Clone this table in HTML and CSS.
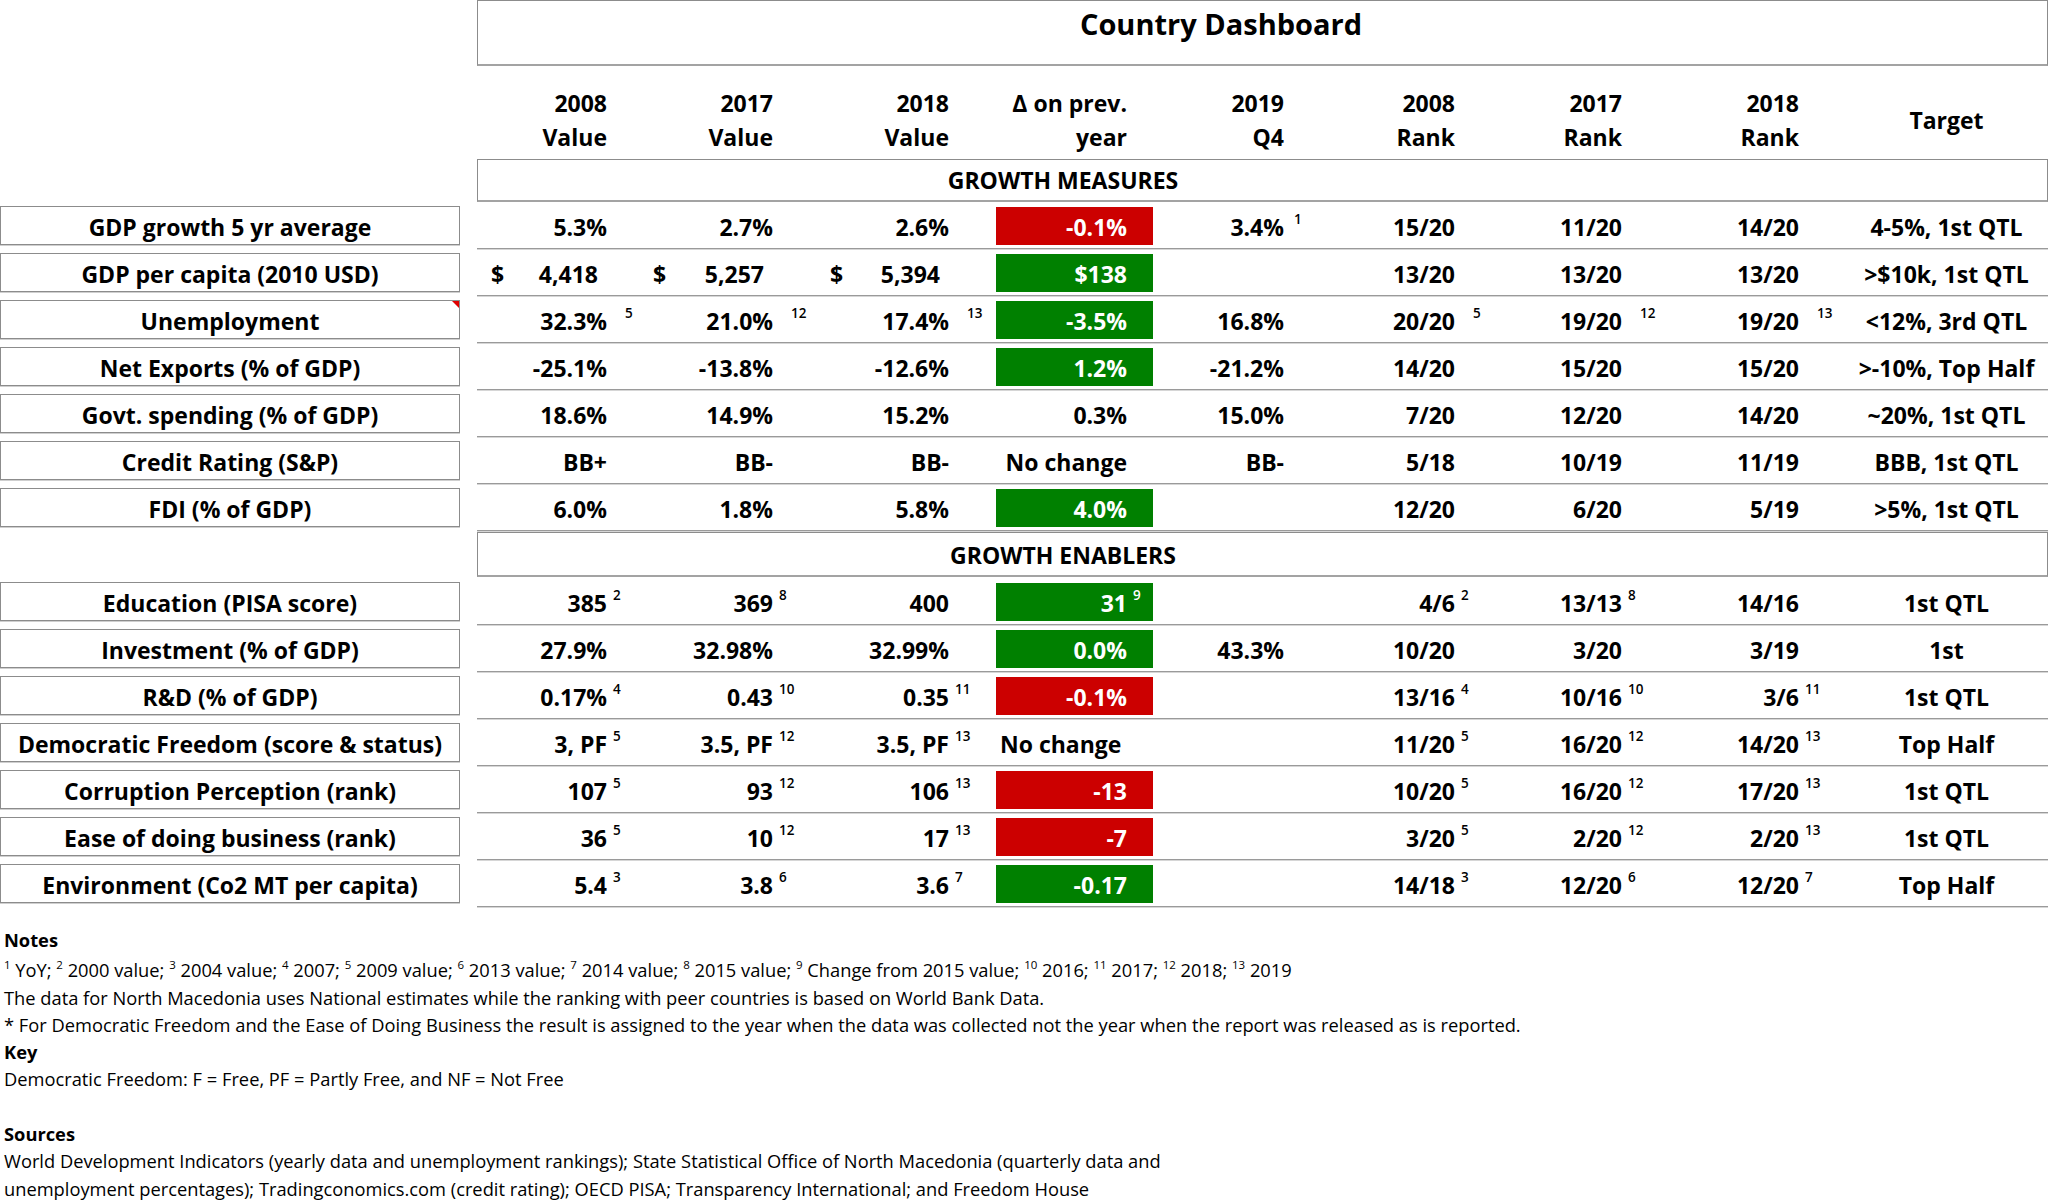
FILE: index.html
```html
<!DOCTYPE html>
<html>
<head>
<meta charset="utf-8">
<title>Country Dashboard</title>
<link rel="stylesheet" href="styles.css">
</head>
<body>
<div class="sheet">
  <div class="title-row"><div class="title">Country Dashboard</div></div>

  <div class="head">
    <div class="cols">
      <div class="c h"><span class="v">2008<br>Value</span><span class="s"></span></div>
      <div class="c h"><span class="v">2017<br>Value</span><span class="s"></span></div>
      <div class="c h"><span class="v">2018<br>Value</span><span class="s"></span></div>
      <div class="c h"><span class="v">Δ on prev.<br>year</span><span class="s"></span></div>
      <div class="c h"><span class="v">2019<br>Q4</span><span class="s"></span></div>
      <div class="c h"><span class="v">2008<br>Rank</span><span class="s"></span></div>
      <div class="c h"><span class="v">2017<br>Rank</span><span class="s"></span></div>
      <div class="c h"><span class="v">2018<br>Rank</span><span class="s"></span></div>
      <div class="t h">Target</div>
    </div>
  </div>

  <div class="band-row"><div class="band">GROWTH MEASURES</div></div>

  <div class="row">
    <div class="label">GDP growth 5 yr average</div>
    <div class="cols data">
      <div class="c"><span class="v">5.3%</span><span class="s"></span></div>
      <div class="c"><span class="v">2.7%</span><span class="s"></span></div>
      <div class="c"><span class="v">2.6%</span><span class="s"></span></div>
      <div class="c d red"><span class="v">-0.1%</span><span class="s"></span></div>
      <div class="c"><span class="v">3.4%</span><span class="s q"><sup>1</sup></span></div>
      <div class="c"><span class="v">15/20</span><span class="s"></span></div>
      <div class="c"><span class="v">11/20</span><span class="s"></span></div>
      <div class="c"><span class="v">14/20</span><span class="s"></span></div>
      <div class="t">4-5%, 1st QTL</div>
    </div>
  </div>

  <div class="row">
    <div class="label">GDP per capita (2010 USD)</div>
    <div class="cols data">
      <div class="c"><span class="v acc"><span>$</span><span>4,418</span></span><span class="s"></span></div>
      <div class="c"><span class="v acc"><span>$</span><span>5,257</span></span><span class="s"></span></div>
      <div class="c"><span class="v acc"><span>$</span><span>5,394</span></span><span class="s"></span></div>
      <div class="c d green"><span class="v">$138</span><span class="s"></span></div>
      <div class="c"><span class="v"></span><span class="s"></span></div>
      <div class="c"><span class="v">13/20</span><span class="s"></span></div>
      <div class="c"><span class="v">13/20</span><span class="s"></span></div>
      <div class="c"><span class="v">13/20</span><span class="s"></span></div>
      <div class="t">&gt;$10k, 1st QTL</div>
    </div>
  </div>

  <div class="row">
    <div class="label note">Unemployment</div>
    <div class="cols data">
      <div class="c"><span class="v">32.3%</span><span class="s far"><sup>5</sup></span></div>
      <div class="c"><span class="v">21.0%</span><span class="s far"><sup>12</sup></span></div>
      <div class="c"><span class="v">17.4%</span><span class="s far"><sup>13</sup></span></div>
      <div class="c d green"><span class="v">-3.5%</span><span class="s"></span></div>
      <div class="c"><span class="v">16.8%</span><span class="s"></span></div>
      <div class="c"><span class="v">20/20</span><span class="s far"><sup>5</sup></span></div>
      <div class="c"><span class="v">19/20</span><span class="s far"><sup>12</sup></span></div>
      <div class="c"><span class="v">19/20</span><span class="s far"><sup>13</sup></span></div>
      <div class="t">&lt;12%, 3rd QTL</div>
    </div>
  </div>

  <div class="row">
    <div class="label">Net Exports (% of GDP)</div>
    <div class="cols data">
      <div class="c"><span class="v">-25.1%</span><span class="s"></span></div>
      <div class="c"><span class="v">-13.8%</span><span class="s"></span></div>
      <div class="c"><span class="v">-12.6%</span><span class="s"></span></div>
      <div class="c d green"><span class="v">1.2%</span><span class="s"></span></div>
      <div class="c"><span class="v">-21.2%</span><span class="s"></span></div>
      <div class="c"><span class="v">14/20</span><span class="s"></span></div>
      <div class="c"><span class="v">15/20</span><span class="s"></span></div>
      <div class="c"><span class="v">15/20</span><span class="s"></span></div>
      <div class="t">&gt;-10%, Top Half</div>
    </div>
  </div>

  <div class="row">
    <div class="label">Govt. spending (% of GDP)</div>
    <div class="cols data">
      <div class="c"><span class="v">18.6%</span><span class="s"></span></div>
      <div class="c"><span class="v">14.9%</span><span class="s"></span></div>
      <div class="c"><span class="v">15.2%</span><span class="s"></span></div>
      <div class="c"><span class="v">0.3%</span><span class="s"></span></div>
      <div class="c"><span class="v">15.0%</span><span class="s"></span></div>
      <div class="c"><span class="v">7/20</span><span class="s"></span></div>
      <div class="c"><span class="v">12/20</span><span class="s"></span></div>
      <div class="c"><span class="v">14/20</span><span class="s"></span></div>
      <div class="t">~20%, 1st QTL</div>
    </div>
  </div>

  <div class="row">
    <div class="label">Credit Rating (S&amp;P)</div>
    <div class="cols data">
      <div class="c"><span class="v">BB+</span><span class="s"></span></div>
      <div class="c"><span class="v">BB-</span><span class="s"></span></div>
      <div class="c"><span class="v">BB-</span><span class="s"></span></div>
      <div class="c"><span class="v">No change</span><span class="s"></span></div>
      <div class="c"><span class="v">BB-</span><span class="s"></span></div>
      <div class="c"><span class="v">5/18</span><span class="s"></span></div>
      <div class="c"><span class="v">10/19</span><span class="s"></span></div>
      <div class="c"><span class="v">11/19</span><span class="s"></span></div>
      <div class="t">BBB, 1st QTL</div>
    </div>
  </div>

  <div class="row">
    <div class="label">FDI (% of GDP)</div>
    <div class="cols data">
      <div class="c"><span class="v">6.0%</span><span class="s"></span></div>
      <div class="c"><span class="v">1.8%</span><span class="s"></span></div>
      <div class="c"><span class="v">5.8%</span><span class="s"></span></div>
      <div class="c d green"><span class="v">4.0%</span><span class="s"></span></div>
      <div class="c"><span class="v"></span><span class="s"></span></div>
      <div class="c"><span class="v">12/20</span><span class="s"></span></div>
      <div class="c"><span class="v">6/20</span><span class="s"></span></div>
      <div class="c"><span class="v">5/19</span><span class="s"></span></div>
      <div class="t">&gt;5%, 1st QTL</div>
    </div>
  </div>

  <div class="band-row second"><div class="band">GROWTH ENABLERS</div></div>

  <div class="row">
    <div class="label">Education (PISA score)</div>
    <div class="cols data">
      <div class="c"><span class="v">385</span><span class="s"><sup>2</sup></span></div>
      <div class="c"><span class="v">369</span><span class="s"><sup>8</sup></span></div>
      <div class="c"><span class="v">400</span><span class="s"></span></div>
      <div class="c d green"><span class="v">31</span><span class="s"><sup>9</sup></span></div>
      <div class="c"><span class="v"></span><span class="s"></span></div>
      <div class="c"><span class="v">4/6</span><span class="s"><sup>2</sup></span></div>
      <div class="c"><span class="v">13/13</span><span class="s"><sup>8</sup></span></div>
      <div class="c"><span class="v">14/16</span><span class="s"></span></div>
      <div class="t">1st QTL</div>
    </div>
  </div>

  <div class="row">
    <div class="label">Investment (% of GDP)</div>
    <div class="cols data">
      <div class="c"><span class="v">27.9%</span><span class="s"></span></div>
      <div class="c"><span class="v">32.98%</span><span class="s"></span></div>
      <div class="c"><span class="v">32.99%</span><span class="s"></span></div>
      <div class="c d green"><span class="v">0.0%</span><span class="s"></span></div>
      <div class="c"><span class="v">43.3%</span><span class="s"></span></div>
      <div class="c"><span class="v">10/20</span><span class="s"></span></div>
      <div class="c"><span class="v">3/20</span><span class="s"></span></div>
      <div class="c"><span class="v">3/19</span><span class="s"></span></div>
      <div class="t">1st</div>
    </div>
  </div>

  <div class="row">
    <div class="label">R&amp;D (% of GDP)</div>
    <div class="cols data">
      <div class="c"><span class="v">0.17%</span><span class="s"><sup>4</sup></span></div>
      <div class="c"><span class="v">0.43</span><span class="s"><sup>10</sup></span></div>
      <div class="c"><span class="v">0.35</span><span class="s"><sup>11</sup></span></div>
      <div class="c d red"><span class="v">-0.1%</span><span class="s"></span></div>
      <div class="c"><span class="v"></span><span class="s"></span></div>
      <div class="c"><span class="v">13/16</span><span class="s"><sup>4</sup></span></div>
      <div class="c"><span class="v">10/16</span><span class="s"><sup>10</sup></span></div>
      <div class="c"><span class="v">3/6</span><span class="s"><sup>11</sup></span></div>
      <div class="t">1st QTL</div>
    </div>
  </div>

  <div class="row">
    <div class="label">Democratic Freedom (score &amp; status)</div>
    <div class="cols data">
      <div class="c"><span class="v">3, PF</span><span class="s"><sup>5</sup></span></div>
      <div class="c"><span class="v">3.5, PF</span><span class="s"><sup>12</sup></span></div>
      <div class="c"><span class="v">3.5, PF</span><span class="s"><sup>13</sup></span></div>
      <div class="c"><span class="v left">No change</span><span class="s"></span></div>
      <div class="c"><span class="v"></span><span class="s"></span></div>
      <div class="c"><span class="v">11/20</span><span class="s"><sup>5</sup></span></div>
      <div class="c"><span class="v">16/20</span><span class="s"><sup>12</sup></span></div>
      <div class="c"><span class="v">14/20</span><span class="s"><sup>13</sup></span></div>
      <div class="t">Top Half</div>
    </div>
  </div>

  <div class="row">
    <div class="label">Corruption Perception (rank)</div>
    <div class="cols data">
      <div class="c"><span class="v">107</span><span class="s"><sup>5</sup></span></div>
      <div class="c"><span class="v">93</span><span class="s"><sup>12</sup></span></div>
      <div class="c"><span class="v">106</span><span class="s"><sup>13</sup></span></div>
      <div class="c d red"><span class="v">-13</span><span class="s"></span></div>
      <div class="c"><span class="v"></span><span class="s"></span></div>
      <div class="c"><span class="v">10/20</span><span class="s"><sup>5</sup></span></div>
      <div class="c"><span class="v">16/20</span><span class="s"><sup>12</sup></span></div>
      <div class="c"><span class="v">17/20</span><span class="s"><sup>13</sup></span></div>
      <div class="t">1st QTL</div>
    </div>
  </div>

  <div class="row">
    <div class="label">Ease of doing business (rank)</div>
    <div class="cols data">
      <div class="c"><span class="v">36</span><span class="s"><sup>5</sup></span></div>
      <div class="c"><span class="v">10</span><span class="s"><sup>12</sup></span></div>
      <div class="c"><span class="v">17</span><span class="s"><sup>13</sup></span></div>
      <div class="c d red"><span class="v">-7</span><span class="s"></span></div>
      <div class="c"><span class="v"></span><span class="s"></span></div>
      <div class="c"><span class="v">3/20</span><span class="s"><sup>5</sup></span></div>
      <div class="c"><span class="v">2/20</span><span class="s"><sup>12</sup></span></div>
      <div class="c"><span class="v">2/20</span><span class="s"><sup>13</sup></span></div>
      <div class="t">1st QTL</div>
    </div>
  </div>

  <div class="row">
    <div class="label">Environment (Co2 MT per capita)</div>
    <div class="cols data">
      <div class="c"><span class="v">5.4</span><span class="s"><sup>3</sup></span></div>
      <div class="c"><span class="v">3.8</span><span class="s"><sup>6</sup></span></div>
      <div class="c"><span class="v">3.6</span><span class="s"><sup>7</sup></span></div>
      <div class="c d green"><span class="v">-0.17</span><span class="s"></span></div>
      <div class="c"><span class="v"></span><span class="s"></span></div>
      <div class="c"><span class="v">14/18</span><span class="s"><sup>3</sup></span></div>
      <div class="c"><span class="v">12/20</span><span class="s"><sup>6</sup></span></div>
      <div class="c"><span class="v">12/20</span><span class="s"><sup>7</sup></span></div>
      <div class="t">Top Half</div>
    </div>
  </div>
</div>

<div class="notes">
  <div class="b">Notes</div>
  <div class="first"><sup>1</sup> YoY; <sup>2</sup> 2000 value; <sup>3</sup> 2004 value; <sup>4</sup> 2007; <sup>5</sup> 2009 value; <sup>6</sup> 2013 value; <sup>7</sup> 2014 value; <sup>8</sup> 2015 value; <sup>9</sup> Change from 2015 value; <sup>10</sup> 2016; <sup>11</sup> 2017; <sup>12</sup> 2018; <sup>13</sup> 2019</div>
  <div>The data for North Macedonia uses National estimates while the ranking with peer countries is based on World Bank Data.</div>
  <div>* For Democratic Freedom and the Ease of Doing Business the result is assigned to the year when the data was collected not the year when the report was released as is reported.</div>
  <div class="b">Key</div>
  <div>Democratic Freedom: F = Free, PF = Partly Free, and NF = Not Free</div>
  <div class="blank"></div>
  <div class="b">Sources</div>
  <div>World Development Indicators (yearly data and unemployment rankings); State Statistical Office of North Macedonia (quarterly data and<br>unemployment percentages); Tradingconomics.com (credit rating); OECD PISA; Transparency International; and Freedom House</div>
</div>
</body>
</html>
```

FILE: styles.css
```css
* { box-sizing: border-box; }
html, body { margin: 0; padding: 0; background: #fff; overflow: hidden; }
body {
  width: 2048px;
  font-family: "Open Sans", "Noto Sans", sans-serif;
  color: #000;
}

.sheet { font-weight: 700; font-size: 23px; }

/* title */
.title-row { display: flex; height: 66px; padding-left: 477px; }
.title {
  flex: 1;
  border: 1px solid #8c8c8c;
  border-bottom: 2px solid #a3a3a3;
  font-size: 29px;
  line-height: 46px;
  text-align: center;
  padding-right: 83px;
}

/* shared column grid */
.cols {
  flex: 1;
  display: grid;
  grid-template-columns: 163px 166px 190px 157px 165px 172px 172px 183px 1fr;
}
.cols > :nth-child(1) { --s: 33px; }
.cols > :nth-child(2) { --s: 33px; }
.cols > :nth-child(3) { --s: 47px; }
.cols > :nth-child(4) { --s: 26px; }
.cols > :nth-child(5) { --s: 34px; }
.cols > :nth-child(6) { --s: 35px; }
.cols > :nth-child(7) { --s: 40px; }
.cols > :nth-child(8) { --s: 46px; }

.c {
  display: grid;
  grid-template-columns: 1fr var(--s);
  padding-top: 3px;
  line-height: 44px;
  white-space: nowrap;
}
.v { text-align: right; }
.v.left { text-align: left; padding-left: 4px; }
.s { text-align: left; padding-left: 6px; }
.s.far { padding-left: 18px; }
.s.q { padding-left: 10px; }

.acc { display: flex; justify-content: space-between; padding-right: 9px; }
.cols > :nth-child(1) .acc { padding-left: 14px; }
.cols > :nth-child(2) .acc { padding-left: 13px; }
.cols > :nth-child(3) .acc { padding-left: 24px; }

.t { text-align: center; padding-top: 3px; line-height: 44px; white-space: nowrap; }

.sheet sup {
  font-size: 13.5px;
  line-height: 1;
  vertical-align: 12px;
  font-weight: 600;
}

/* header */
.head { display: flex; height: 93px; padding: 20px 0 0 477px; }
.c.h { padding-top: 0; line-height: 34px; }
.t.h { padding-top: 0; padding-bottom: 5px; line-height: 34px; align-self: center; }

/* section bands */
.band-row { display: flex; height: 43px; padding-left: 477px; }
.band {
  flex: 1;
  height: 43px;
  border: 1px solid #8c8c8c;
  border-bottom: 2px solid #a3a3a3;
  text-align: center;
  padding-right: 399px;
  line-height: 40px;
}
.band-row.second { height: 47px; padding-top: 1px; }
.band-row.second .band { height: 45px; line-height: 44px; }

/* data rows */
.row { display: flex; height: 47px; }
.label {
  position: relative;
  flex: none;
  width: 460px;
  height: 39px;
  margin-top: 4px;
  border: 1px solid #8c8c8c;
  box-shadow: 0 1px 0 #cfcfcf;
  text-align: center;
  padding-top: 2px;
  line-height: 36px;
  white-space: nowrap;
}
.label.note::after {
  content: "";
  position: absolute;
  top: 0;
  right: 0;
  border-style: solid;
  border-width: 0 7px 7px 0;
  border-color: transparent #e00000 transparent transparent;
}
.data {
  margin-left: 17px;
  height: 47px;
  border-bottom: 1px solid #9a9a9a;
  box-shadow: 0 1px 0 #d6d6d6;
}
.c.d {
  margin-top: 5px;
  height: 38px;
  padding-top: 2px;
  line-height: 36px;
  color: #fff;
}
.c.d.red { background: #cc0000; }
.c.d.green { background: #008000; }

/* notes */
.notes {
  margin-top: 19px;
  padding-left: 4px;
  font-size: 18.3px;
  line-height: 27.3px;
  font-weight: 400;
  white-space: nowrap;
}
.notes .b { font-weight: 700; }
.notes .first { padding-top: 3px; }
.notes .blank { height: 27.3px; }
.notes sup {
  font-size: 11.5px;
  line-height: 1;
  vertical-align: 8px;
}
```
